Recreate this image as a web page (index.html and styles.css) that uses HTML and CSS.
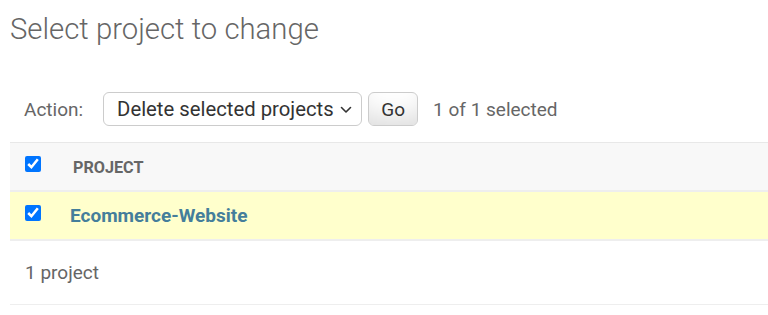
FILE: index.html
```html
<!DOCTYPE html>
<html lang="en">
<head>
<meta charset="utf-8">
<title>Select project to change</title>
<link rel="stylesheet" href="styles.css">
</head>
<body>
<div class="content">
  <h1 class="title">Select project to change</h1>
  <form class="changelist">
    <div class="actions">
      <label class="action-label" for="action">Action:</label>
      <span class="select-wrap">
        <select id="action" class="action-select">
          <option>Delete selected projects</option>
        </select>
        <svg class="chevron" width="12" height="8" viewBox="0 0 12 8"><path d="M1.5 1.5 L6 6 L10.5 1.5" fill="none" stroke="#333" stroke-width="1.6" stroke-linecap="round" stroke-linejoin="round"/></svg>
      </span>
      <button type="button" class="go-button">Go</button>
      <span class="action-counter">1 of 1 selected</span>
    </div>
    <table class="result-list">
      <thead>
        <tr>
          <th class="check-col"><input type="checkbox" class="check" checked></th>
          <th class="name-col">PROJECT</th>
        </tr>
      </thead>
      <tbody>
        <tr class="selected">
          <td class="check-col"><input type="checkbox" class="check" checked></td>
          <td class="name-cell"><a href="#" class="row-link">Ecommerce-Website</a></td>
        </tr>
      </tbody>
    </table>
    <p class="paginator">1 project</p>
  </form>
</div>
</body>
</html>
```
FILE: styles.css
```css
html, body {
  margin: 0;
  padding: 0;
  background: #fff;
}
body {
  font-family: Roboto, "Liberation Sans", Arial, sans-serif;
  color: #333;
  width: 768px;
  overflow: hidden;
}
.content {
  padding-left: 10px;
}
.title {
  margin: 0;
  padding-top: 12px;
  font-size: 29.3px;
  line-height: 35px;
  font-weight: 300;
  color: #666;
}
.changelist {
  margin: 0;
}
.actions {
  display: flex;
  align-items: center;
  margin-top: 45px;
  padding-left: 14px;
  height: 34px;
}
.action-label {
  font-size: 19px;
  color: #666;
  margin-right: 20px;
}
.select-wrap {
  position: relative;
  display: inline-block;
}
.action-select {
  appearance: none;
  -webkit-appearance: none;
  width: 259px;
  height: 34px;
  margin: 0;
  padding: 0 0 0 13px;
  border: 1px solid #ccc;
  border-radius: 6px;
  background: #fff;
  font-family: inherit;
  font-size: 20.3px;
  color: #333;
}
.chevron {
  position: absolute;
  right: 10px;
  top: 14px;
  pointer-events: none;
}
.go-button {
  margin-left: 6px;
  width: 50px;
  height: 34px;
  padding: 0;
  border: 1px solid #ccc;
  border-radius: 6px;
  background: #fff;
  box-shadow: 0 -22px 29px -15px rgba(0, 0, 0, 0.15) inset;
  font-family: inherit;
  font-size: 19px;
  color: #333;
}
.action-counter {
  margin-left: 15px;
  font-size: 19px;
  color: #666;
}
.result-list {
  margin-top: 16px;
  width: 758px;
  border-collapse: collapse;
}
.result-list th,
.result-list td {
  padding: 0;
  text-align: left;
}
.result-list thead th {
  background: #f8f8f8;
  border-top: 1px solid #e8e8e8;
  border-bottom: 2px solid #eee;
  height: 47px;
}
.result-list thead th.name-col {
  height: 45px;
  padding-top: 2px;
}
.result-list tbody td {
  border-bottom: 2px solid #eee;
  height: 47px;
}
.check-col {
  width: 48px;
  vertical-align: top;
  padding-left: 15px !important;
}
.check {
  display: block;
  margin: 13px 0 0 0;
  width: 16px;
  height: 16px;
  accent-color: #0075ff;
}
.name-col {
  vertical-align: middle;
  font-size: 16.2px;
  font-weight: 700;
  color: #666;
}
.name-cell {
  vertical-align: middle;
}
.name-cell .row-link {
  margin-left: -3px;
}
.selected td {
  background: #ffc;
}
.row-link {
  font-size: 19px;
  font-weight: 700;
  color: #447e9b;
  text-decoration: none;
}
.paginator {
  margin: 0;
  padding-left: 15px;
  height: 63px;
  line-height: 63px;
  font-size: 19px;
  color: #666;
  border-bottom: 1px solid #eee;
}
```
